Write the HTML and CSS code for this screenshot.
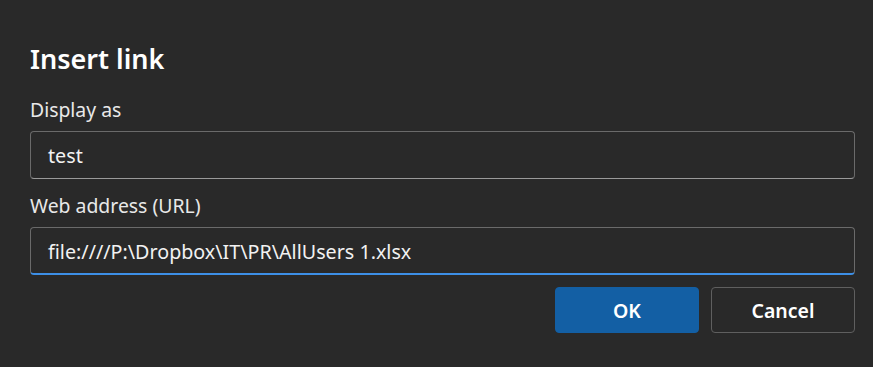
FILE: index.html
```html
<!DOCTYPE html>
<html>
<head>
<meta charset="utf-8">
<link rel="stylesheet" href="styles.css">
</head>
<body>
<div class="dialog">
  <h1 class="title">Insert link</h1>
  <label class="label">Display as</label>
  <div class="field"><span class="value">test</span></div>
  <label class="label">Web address (URL)</label>
  <div class="field focused"><span class="value">file:////P:\Dropbox\IT\PR\AllUsers 1.xlsx</span></div>
  <div class="actions">
    <button class="btn primary">OK</button>
    <button class="btn secondary">Cancel</button>
  </div>
</div>
</body>
</html>
```
FILE: styles.css
```css
html, body {
  margin: 0;
  padding: 0;
  background: #292929;
  height: 100%;
}
.dialog {
  font-family: "Noto Sans", "Open Sans", sans-serif;
  color: #f0f0f0;
  padding: 39px 18px 0 30px;
  display: flex;
  flex-direction: column;
}
.title {
  margin: 0;
  font-size: 27px;
  font-weight: 600;
  line-height: 40px;
  color: #ffffff;
}
.label {
  display: block;
  font-size: 19.4px;
  line-height: 26px;
  margin-top: 18px;
  margin-bottom: 8px;
  color: #e8e8e8;
}
.field + .label {
  margin-top: 14px;
}
.field {
  height: 48px;
  box-sizing: border-box;
  border: 1px solid #6a6a6a;
  border-bottom-color: #9a9a9a;
  border-radius: 4px;
  display: flex;
  align-items: center;
  padding: 0 17px;
  background: #292929;
}
.field.focused {
  height: 48px;
  border-bottom: 2px solid #3d8fe6;
  padding-top: 1px;
}
.value {
  font-size: 19.7px;
  color: #f2f2f2;
}
.actions {
  display: flex;
  justify-content: flex-end;
  gap: 12px;
  margin-top: 12px;
}
.btn {
  width: 144px;
  height: 46px;
  border-radius: 4px;
  font-family: "Noto Sans", "Open Sans", sans-serif;
  font-size: 19.5px;
  font-weight: 600;
  color: #ffffff;
  cursor: pointer;
}
.primary {
  background: #135fa4;
  border: 1px solid #135fa4;
}
.secondary {
  background: #292929;
  border: 1px solid #5f5f5f;
}
```
